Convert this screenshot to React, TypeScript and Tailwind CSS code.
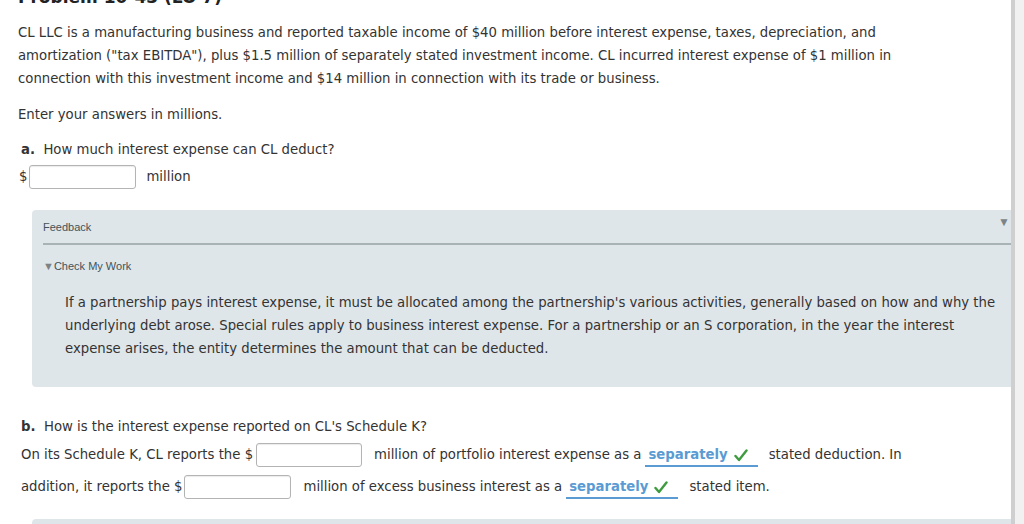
import React from 'react';

const verdana = { fontFamily: '"DejaVu Sans", Verdana, sans-serif' };

function AnswerBox({ width }: { width: string }) {
  return (
    <span
      className={`inline-block align-middle h-[24px] ${width} bg-white border border-[#b4b4b4] rounded-[3px] shadow-[inset_0_1px_1px_rgba(0,0,0,0.08)]`}
    />
  );
}

function Picked({ text }: { text: string }) {
  return (
    <span className="inline-flex items-center gap-[6px] pl-[3px] pr-[10px] border-b-2 border-[#5a9bd3] leading-[20px]">
      <span className="font-bold text-[#5a9bd3]">{text}</span>
      <svg width="14" height="13" viewBox="0 0 14 13">
        <path d="M1.5 7 L5 11 L12.5 1.5" fill="none" stroke="#3f9b3f" strokeWidth="2.4" strokeLinecap="round" strokeLinejoin="round" />
      </svg>
    </span>
  );
}

export default function App() {
  return (
    <div className="flex w-[1024px] h-[524px] overflow-hidden bg-white text-[13.25px] text-[#333]" style={verdana}>
      <div className="w-[1011px] shrink-0 pl-[18px]">
        {/* title cut off at the top */}
        <div className="-mt-[11px] h-[16px] text-[17px] font-bold leading-[16px] text-[#222]">Problem 10-43 (LO 7)</div>

        <p className="mt-[16px] pr-[60px] leading-[23px]">
          CL LLC is a manufacturing business and reported taxable income of $40 million before interest expense, taxes, depreciation, and amortization ("tax EBITDA"), plus $1.5 million of separately stated investment income. CL incurred interest expense of $1 million in connection with this investment income and $14 million in connection with its trade or business.
        </p>

        <p className="mt-[13px] leading-[23px]">Enter your answers in millions.</p>

        <div className="mt-[12px] pl-[3px] leading-[23px]">
          <span className="font-bold">a.</span>&nbsp; How much interest expense can CL deduct?
        </div>
        <div className="mt-[3px] flex items-center h-[26px]">
          <span className="pl-px">$</span>
          <span className="ml-[2px] flex"><AnswerBox width="w-[107px]" /></span>
          <span className="ml-[10px]">million</span>
        </div>

        {/* Feedback panel */}
        <div className="mt-[20px] ml-[14px] h-[177px] bg-[#dfe6e9] rounded-l-[4px] pl-[11px]" style={{ fontFamily: '"Liberation Sans", Arial, sans-serif' }}>
          <div className="flex items-center justify-between h-[35px] border-b-2 border-[#a8b3b6] text-[11px] text-[#3f5359]">
            <span className="pt-[1px]">Feedback</span>
            <span className="mr-[1px] -mt-[10px] text-[12px] text-[#7d8385]">▼</span>
          </div>
          <div className="mt-[13px] flex items-center text-[11px] text-[#3f5359]">
            <span className="text-[11px] text-[#7d8385]">▼</span>Check My Work
          </div>
          <p className="mt-[16px] pl-[22px] pr-[6px] text-[13.25px] leading-[23px] text-[#333]" style={verdana}>
            If a partnership pays interest expense, it must be allocated among the partnership's various activities, generally based on how and why the underlying debt arose. Special rules apply to business interest expense. For a partnership or an S corporation, in the year the interest expense arises, the entity determines the amount that can be deducted.
          </p>
        </div>

        <div className="mt-[28px] pl-[3px] leading-[23px]">
          <span className="font-bold">b.</span>&nbsp; How is the interest expense reported on CL's Schedule K?
        </div>
        <div className="mt-[1px] pl-[3px] leading-[32px]">
          <div className="flex items-center h-[32px]">
            On its Schedule K, CL reports the $
            <span className="ml-[3px] flex"><AnswerBox width="w-[106px]" /></span>
            <span className="ml-[12px]">million of portfolio interest expense as a</span>
            <span className="ml-[4px]"><Picked text="separately" /></span>
            <span className="ml-[11px]">stated deduction. In</span>
          </div>
          <div className="flex items-center h-[32px]">
            addition, it reports the $
            <span className="ml-[2px] flex"><AnswerBox width="w-[107px]" /></span>
            <span className="ml-[12px]">million of excess business interest as a</span>
            <span className="ml-[4px]"><Picked text="separately" /></span>
            <span className="ml-[11px]">stated item.</span>
          </div>
        </div>

        <div className="mt-[16px] ml-[14px] h-[20px] bg-[#dfe6e9] rounded-tl-[4px]" />
      </div>

      {/* scrollbar strip */}
      <div className="flex-1 border-l-[4px] border-[#cfcfcf] bg-[#f1f1f1]" />
    </div>
  );
}
